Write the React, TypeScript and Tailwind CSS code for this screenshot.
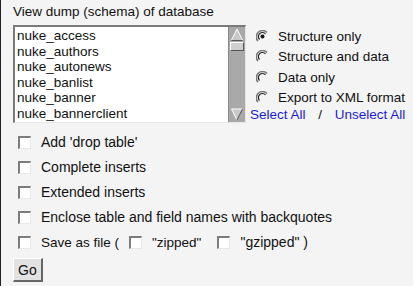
import React from 'react';

const tables = ['nuke_access', 'nuke_authors', 'nuke_autonews', 'nuke_banlist', 'nuke_banner', 'nuke_bannerclient'];
const formats = ['Structure only', 'Structure and data', 'Data only', 'Export to XML format'];
const options = ["Add 'drop table'", 'Complete inserts', 'Extended inserts', 'Enclose table and field names with backquotes'];

function Radio({ checked }: { checked?: boolean }) {
  return (
    <svg width="13" height="13" viewBox="0 0 13 13" className="shrink-0">
      <circle cx="6.5" cy="6.5" r="5.5" fill="#f4f4f4" />
      <path d="M11 2.5 A5.5 5.5 0 0 0 2 11" fill="none" stroke="#7a7a7a" strokeWidth="1.6" />
      <path d="M9.5 3.8 A4 4 0 0 0 3.5 9.5" fill="none" stroke="#222" strokeWidth="1.2" />
      {checked && <circle cx="6.5" cy="6.5" r="2" fill="#111" />}
    </svg>
  );
}

function Check() {
  return (
    <span className="block w-[13px] h-[13px] shrink-0 bg-white border-t-2 border-l-2 border-t-[#7c7c7c] border-l-[#7c7c7c] border-r border-b border-r-[#e8e8e8] border-b-[#e8e8e8]" />
  );
}

function Arrow({ up }: { up?: boolean }) {
  return (
    <svg width="14" height="14" viewBox="0 0 14 14">
      {up ? (
        <>
          <path d="M7 1 L12.5 12 L1.5 12 Z" fill="#c8c8c8" />
          <path d="M1.5 12 L7 1 L12.5 12" fill="none" stroke="#fff" strokeWidth="1" />
          <path d="M1.5 12.5 L12.5 12.5" stroke="#555" strokeWidth="1" />
        </>
      ) : (
        <>
          <path d="M1.5 2 L12.5 2 L7 13 Z" fill="#c8c8c8" />
          <path d="M1.5 2 L12.5 2 M1.5 2 L7 13" fill="none" stroke="#fff" strokeWidth="1" />
          <path d="M12.5 2 L7 13" stroke="#555" strokeWidth="1" />
        </>
      )}
    </svg>
  );
}

export default function App() {
  return (
    <div className="w-[415px] h-[286px] bg-[#f4f4f4] border-l border-[#222] border-r-2 border-r-[#fbfbfb] text-[#111] text-[13.5px] leading-[15.5px] font-['Liberation_Sans',Arial,sans-serif] overflow-hidden">
      <div className="pl-[12px] pt-[4px]">
        <div className="h-[16px]">View dump (schema) of database</div>
        <div className="flex mt-[5px]">
          <div className="w-[233px] h-[98px] flex bg-white border-t-2 border-l-2 border-t-[#7a7a7a] border-l-[#7a7a7a] border-r border-b border-r-[#e6e6e6] border-b-[#e6e6e6]">
            <div className="flex-1 pl-[2px] pt-[1px] overflow-hidden">
              {tables.map(t => (
                <div key={t}>{t}</div>
              ))}
            </div>
            <div className="w-[17px] bg-[#a9a9a9] flex flex-col justify-between border-l border-[#888]">
              <div>
                <div className="flex justify-center pt-[1px]"><Arrow up /></div>
                <div className="h-[9px] mx-[1px] bg-[#cfcfcf] border-t border-l border-white border-r border-b border-r-[#555] border-b-[#555]" />
              </div>
              <div className="flex justify-center pb-[1px]"><Arrow /></div>
            </div>
          </div>
          <div className="flex flex-col pl-[10px] pt-[1px]">
            {formats.map((f, i) => (
              <div key={f} className="flex items-center h-[20.5px] gap-[9px]">
                <Radio checked={i === 0} />
                <span>{f}</span>
              </div>
            ))}
            <div className="text-[#1d1dd6] -ml-[6px] leading-[14px] whitespace-nowrap">
              Select All <span className="text-[#111] mx-[9px]">/</span> Unselect All
            </div>
          </div>
        </div>
        <div className="flex flex-col mt-[7px] pl-[5px] text-[14px]">
          {options.map(o => (
            <div key={o} className="flex items-center h-[25px] gap-[10px]">
              <Check />
              <span>{o}</span>
            </div>
          ))}
          <div className="flex items-center h-[25px] gap-[10px] text-[13.5px]">
            <Check />
            <span>Save as file (</span>
            <Check />
            <span>"zipped"</span>
            <span className="-ml-[4px]" />
            <Check />
            <span className="text-[14px]">"gzipped" )</span>
          </div>
        </div>
        <button className="mt-[3px] h-[24px] px-[4px] bg-[#e2e2e2] border-t border-l border-t-white border-l-white border-r-2 border-b-2 border-r-[#666] border-b-[#666] leading-none text-[14px]">Go</button>
      </div>
    </div>
  );
}
